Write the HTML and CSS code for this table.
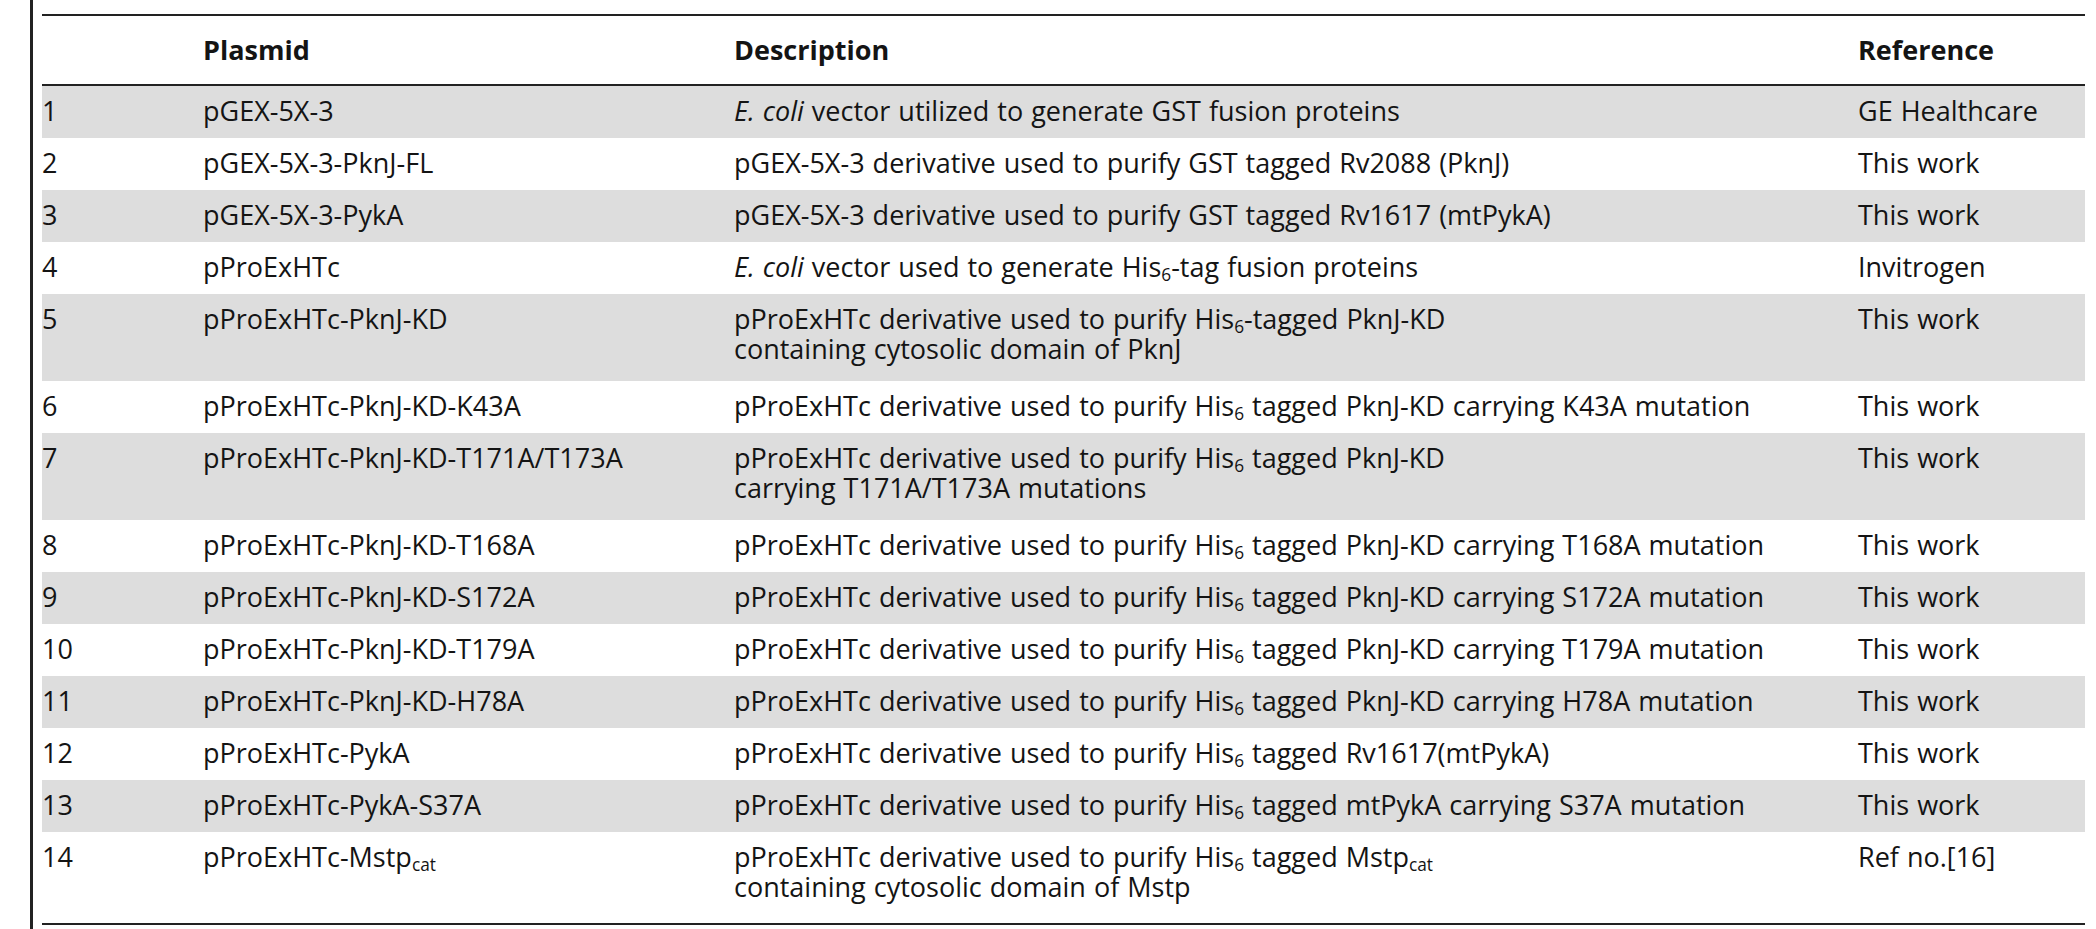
FILE: index.html
```html
<!DOCTYPE html>
<html lang="en">
<head>
<meta charset="utf-8">
<title>Plasmids</title>
<link rel="stylesheet" href="styles.css">
</head>
<body>
<div class="page">
  <table class="plasmids">
    <colgroup>
      <col class="c-num">
      <col class="c-plasmid">
      <col class="c-desc">
      <col class="c-ref">
    </colgroup>
    <thead>
      <tr>
        <th></th>
        <th>Plasmid</th>
        <th>Description</th>
        <th>Reference</th>
      </tr>
    </thead>
    <tbody>
      <tr><td>1</td><td>pGEX-5X-3</td><td><i>E. coli</i> vector utilized to generate GST fusion proteins</td><td>GE Healthcare</td></tr>
      <tr><td>2</td><td>pGEX-5X-3-PknJ-FL</td><td>pGEX-5X-3 derivative used to purify GST tagged Rv2088 (PknJ)</td><td>This work</td></tr>
      <tr><td>3</td><td>pGEX-5X-3-PykA</td><td>pGEX-5X-3 derivative used to purify GST tagged Rv1617 (mtPykA)</td><td>This work</td></tr>
      <tr><td>4</td><td>pProExHTc</td><td><i>E. coli</i> vector used to generate His<sub>6</sub>-tag fusion proteins</td><td>Invitrogen</td></tr>
      <tr class="tall"><td>5</td><td>pProExHTc-PknJ-KD</td><td>pProExHTc derivative used to purify His<sub>6</sub>-tagged PknJ-KD<br>containing cytosolic domain of PknJ</td><td>This work</td></tr>
      <tr><td>6</td><td>pProExHTc-PknJ-KD-K43A</td><td>pProExHTc derivative used to purify His<sub>6</sub> tagged PknJ-KD carrying K43A mutation</td><td>This work</td></tr>
      <tr class="tall"><td>7</td><td>pProExHTc-PknJ-KD-T171A/T173A</td><td>pProExHTc derivative used to purify His<sub>6</sub> tagged PknJ-KD<br>carrying T171A/T173A mutations</td><td>This work</td></tr>
      <tr><td>8</td><td>pProExHTc-PknJ-KD-T168A</td><td>pProExHTc derivative used to purify His<sub>6</sub> tagged PknJ-KD carrying T168A mutation</td><td>This work</td></tr>
      <tr><td>9</td><td>pProExHTc-PknJ-KD-S172A</td><td>pProExHTc derivative used to purify His<sub>6</sub> tagged PknJ-KD carrying S172A mutation</td><td>This work</td></tr>
      <tr><td>10</td><td>pProExHTc-PknJ-KD-T179A</td><td>pProExHTc derivative used to purify His<sub>6</sub> tagged PknJ-KD carrying T179A mutation</td><td>This work</td></tr>
      <tr><td>11</td><td>pProExHTc-PknJ-KD-H78A</td><td>pProExHTc derivative used to purify His<sub>6</sub> tagged PknJ-KD carrying H78A mutation</td><td>This work</td></tr>
      <tr><td>12</td><td>pProExHTc-PykA</td><td>pProExHTc derivative used to purify His<sub>6</sub> tagged Rv1617(mtPykA)</td><td>This work</td></tr>
      <tr><td>13</td><td>pProExHTc-PykA-S37A</td><td>pProExHTc derivative used to purify His<sub>6</sub> tagged mtPykA carrying S37A mutation</td><td>This work</td></tr>
      <tr class="tall last"><td>14</td><td>pProExHTc-Mstp<sub>cat</sub></td><td>pProExHTc derivative used to purify His<sub>6</sub> tagged Mstp<sub>cat</sub><br>containing cytosolic domain of Mstp</td><td>Ref no.[16]</td></tr>
    </tbody>
  </table>
</div>
</body>
</html>
```
FILE: styles.css
```css
html, body {
  margin: 0;
  padding: 0;
  background: #ffffff;
}

body {
  font-family: "Open Sans", "Noto Sans", "Liberation Sans", sans-serif;
  font-size: 27px;
  line-height: 34px;
  color: #141414;
}

.page {
  margin-left: 30px;
  border-left: 3px solid #222222;
  padding: 14px 0 0 9px;
  min-height: 929px;
  box-sizing: border-box;
}

.plasmids {
  width: 2043px;
  table-layout: fixed;
  border-collapse: collapse;
  border-bottom: 2px solid #222222;
  word-spacing: 1px;
}

.c-num { width: 161px; }
.c-plasmid { width: 531px; }
.c-desc { width: 1124px; }
.c-ref { width: 227px; }

.plasmids th {
  text-align: left;
  font-weight: 700;
  padding: 17px 0 17px 0;
  border-top: 2px solid #222222;
  border-bottom: 2px solid #222222;
  vertical-align: top;
  white-space: nowrap;
  word-spacing: 0;
}

.plasmids td {
  line-height: 30px;
  padding: 10px 0 12px 0;
  vertical-align: top;
  white-space: nowrap;
}

.plasmids tr.tall td {
  padding-bottom: 17px;
}

.plasmids tr.last td {
  padding-bottom: 21px;
}

.plasmids tbody tr:nth-child(odd) {
  background: #dddddd;
}

.plasmids sub {
  font-size: 0.64em;
  line-height: 0;
  vertical-align: -0.24em;
}
```
